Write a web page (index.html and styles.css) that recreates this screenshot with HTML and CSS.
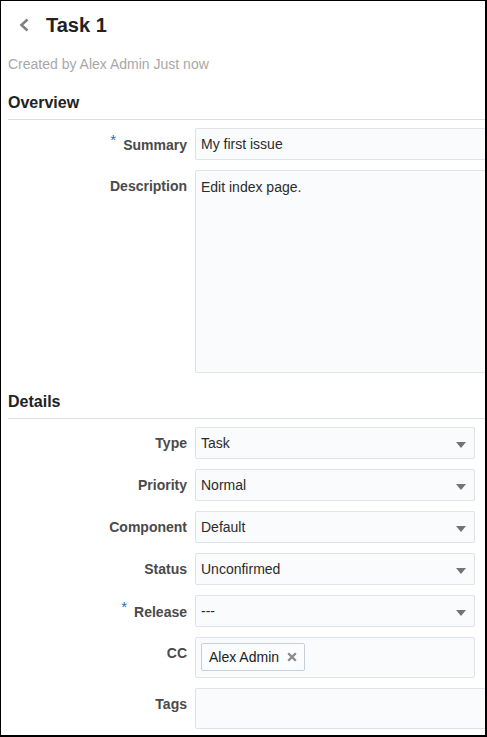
FILE: index.html
```html
<!DOCTYPE html>
<html>
<head>
<meta charset="utf-8">
<link rel="stylesheet" href="styles.css">
</head>
<body>
<div class="frame">
  <header class="titlebar">
    <svg class="back" width="12" height="14" viewBox="0 0 12 14"><polyline points="9.5,1.5 3.5,7 9.5,12.5" fill="none" stroke="#808080" stroke-width="2.6"/></svg>
    <h1 class="title">Task 1</h1>
  </header>
  <div class="meta">Created by Alex Admin Just now</div>

  <h2 class="section-title">Overview</h2>
  <div class="fields">
    <div class="row">
      <label class="label"><span class="req">*</span>Summary</label>
      <div class="input wide">My first issue</div>
    </div>
    <div class="row">
      <label class="label">Description</label>
      <div class="input wide textarea">Edit index page.</div>
    </div>
  </div>

  <h2 class="section-title">Details</h2>
  <div class="fields">
    <div class="row">
      <label class="label">Type</label>
      <div class="input select">Task<span class="caret"></span></div>
    </div>
    <div class="row">
      <label class="label">Priority</label>
      <div class="input select">Normal<span class="caret"></span></div>
    </div>
    <div class="row">
      <label class="label">Component</label>
      <div class="input select">Default<span class="caret"></span></div>
    </div>
    <div class="row">
      <label class="label">Status</label>
      <div class="input select">Unconfirmed<span class="caret"></span></div>
    </div>
    <div class="row">
      <label class="label"><span class="req">*</span>Release</label>
      <div class="input select">---<span class="caret"></span></div>
    </div>
    <div class="row">
      <label class="label">CC</label>
      <div class="input chips"><span class="chip">Alex Admin<svg class="chip-x" width="10" height="10" viewBox="0 0 10 10"><path d="M1.2 1.2 L8.8 8.8 M8.8 1.2 L1.2 8.8" stroke="#8a8a8a" stroke-width="2.3" fill="none"/></svg></span></div>
    </div>
    <div class="row">
      <label class="label">Tags</label>
      <div class="input wide tags"></div>
    </div>
  </div>
</div>
</body>
</html>
```

FILE: styles.css
```css
html, body {
  margin: 0;
  padding: 0;
  background: #fff;
}
.frame {
  width: 487px;
  height: 737px;
  box-sizing: border-box;
  border-style: solid;
  border-color: #000;
  border-width: 1px 2px 2px 1px;
  padding: 12px 0 0 7px;
  overflow: hidden;
  font-family: "Liberation Sans", Arial, sans-serif;
  color: #333;
}
.titlebar {
  display: flex;
  align-items: center;
  height: 24px;
}
.back {
  margin-left: 10px;
  display: block;
}
.title {
  margin: 0 0 0 16px;
  font-size: 20px;
  line-height: 24px;
  font-weight: bold;
  color: #222;
}
.meta {
  margin-top: 17px;
  font-size: 14px;
  line-height: 20px;
  color: #a8a8a8;
}
.section-title {
  margin: 18px 0 0 0;
  padding-top: 1px;
  padding-bottom: 6px;
  font-size: 16px;
  line-height: 20px;
  font-weight: bold;
  color: #222;
  border-bottom: 1px solid #dcdfe2;
}
.fields {
  padding-top: 8px;
  display: flex;
  flex-direction: column;
  gap: 10px;
}
.row {
  display: grid;
  grid-template-columns: 179px 1fr;
  column-gap: 8px;
  align-items: start;
}
.label {
  text-align: right;
  font-size: 14px;
  font-weight: bold;
  line-height: 31px;
  height: 32px;
  box-sizing: border-box;
  padding-top: 1px;
  color: #4a4a4a;
  white-space: nowrap;
}
.req {
  color: #1a73c9;
  font-weight: normal;
  font-size: 15px;
  position: relative;
  top: -5px;
  margin-right: 7px;
}
.input {
  box-sizing: border-box;
  height: 32px;
  border: 1px solid #dfe3e7;
  border-radius: 2px;
  background: #fafbfc;
  font-size: 14px;
  line-height: 29px;
  padding: 1px 5px 0;
  color: #2b2b2b;
  position: relative;
}
.wide {
  width: 320px;
}
.textarea {
  height: 203px;
  line-height: 18px;
  padding-top: 7px;
}
.select {
  width: 280px;
}
.caret {
  position: absolute;
  right: 8px;
  top: 14px;
  width: 0;
  height: 0;
  border-left: 5px solid transparent;
  border-right: 5px solid transparent;
  border-top: 6px solid #737373;
}
.chips {
  width: 280px;
  height: 41px;
  padding: 5px 5px 6px;
  display: flex;
  align-items: flex-start;
}
.chip {
  box-sizing: border-box;
  height: 28px;
  display: inline-flex;
  align-items: center;
  border: 1px solid #c6d0d9;
  border-radius: 2px;
  background: #fbfcfd;
  padding: 0 7px 0 7px;
  font-size: 14px;
  line-height: 26px;
  color: #222;
}
.chip-x {
  margin-left: 8px;
  display: block;
}
.tags {
  height: 41px;
}
```
